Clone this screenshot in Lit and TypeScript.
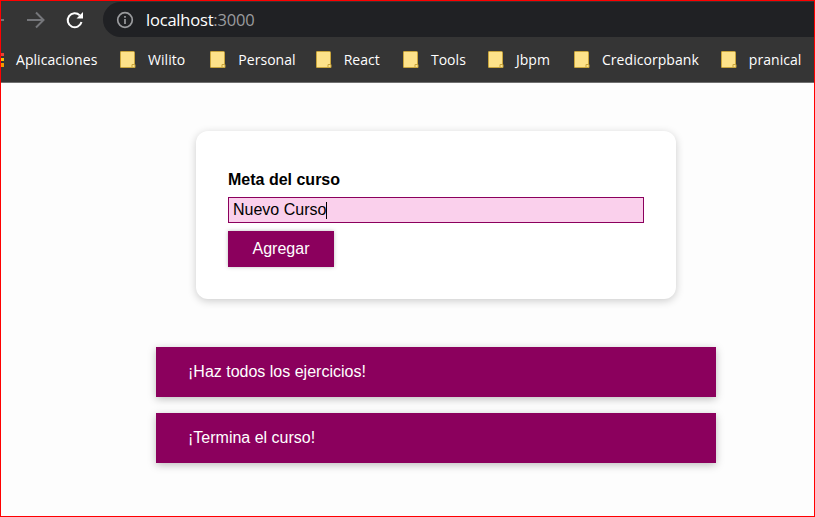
import { LitElement, html, css } from "lit";
import { customElement } from "lit/decorators.js";

const folder = html`<svg class="folder" width="16" height="18" viewBox="0 0 16 18">
  <path d="M1 .5h12.500a1 1 0 0 1 1 1V16.500H1a.5.5 0 0 1-.5-.5V1a.5.5 0 0 1 .5-.5z" fill="#fde28a" stroke="#c9a53c"/>
  <path d="M12 16.500V13.500h3v3z" fill="#fde28a" stroke="#c9a53c"/>
</svg>`;

const bookmarks: [string, number][] = [
  ["Wilito", 25],
  ["Personal", 20],
  ["React", 23],
  ["Tools", 22],
  ["Jbpm", 24],
  ["Credicorpbank", 22],
  ["pranical", 0],
];

@customElement("app-root")
export class AppRoot extends LitElement {
  static styles = css`
    :host {
      display: block;
      width: 815px;
      height: 517px;
      font-family: "Liberation Sans", Arial, sans-serif;
      background: #fff;
      overflow: hidden;
    }
    .frame {
      box-sizing: border-box;
      width: 815px;
      height: 517px;
      border: 1px solid #f00;
      display: flex;
      flex-direction: column;
      overflow: hidden;
    }
    .toolbar {
      height: 36px;
      flex: none;
      background: #353535;
      display: flex;
      align-items: flex-end;
      box-sizing: border-box;
    }
    .nav {
      width: 102px;
      height: 35px;
      flex: none;
      display: flex;
      align-items: center;
      box-sizing: border-box;
    }
    .back {
      margin-right: 23px;
    }
    .forward {
      margin-right: 19px;
    }
    .omnibox {
      flex: 1;
      height: 35px;
      background: #202124;
      border-radius: 18px 0 0 18px;
      display: flex;
      align-items: center;
      padding-left: 13px;
      gap: 12px;
      font: 16.500px "Open Sans", sans-serif;
      color: #fff;
      letter-spacing: -0.2px;
    }
    .omnibox .port {
      color: #9a9b9e;
    }
    .bookmarks {
      height: 46px;
      flex: none;
      background: #353535;
      border-bottom: 1px solid #707070;
      box-sizing: border-box;
      display: flex;
      align-items: center;
      padding-left: 15px;
      color: #fff;
      font: 14px "Open Sans", sans-serif;
      letter-spacing: 0.05px;
      position: relative;
    }
    .apps {
      position: absolute;
      left: 0;
      top: 16px;
      width: 3px;
      height: 14px;
      background: repeating-linear-gradient(to bottom, #ea4335 0 3px, #353535 3px 5px, #fbbc05 5px 8px, #353535 8px 10px, #f29900 10px 14px);
    }
    .bm {
      display: flex;
      align-items: center;
      flex: none;
    }
    .first {
      width: 104px;
      flex: none;
    }
    .folder {
      margin-right: 12px;
      flex: none;
    }
    .page {
      flex: 1;
      background: #fdfdfd;
      display: flex;
      flex-direction: column;
      align-items: center;
      padding: 48px 0 0 57px;
    }
    .card {
      width: 480px;
      height: 168px;
      box-sizing: border-box;
      background: #fff;
      border-radius: 12px;
      padding: 40px 32px 32px;
      box-shadow: 0 2px 8px rgba(0, 0, 0, 0.2);
      display: flex;
      flex-direction: column;
      align-items: flex-start;
    }
    label {
      font-weight: bold;
      font-size: 16px;
      line-height: 18px;
      color: #000;
      margin-bottom: 8px;
    }
    .input {
      box-sizing: border-box;
      width: 416px;
      height: 26px;
      border: 1px solid #8b005d;
      background: #fad0ec;
      font-size: 16px;
      line-height: 24px;
      padding: 0 4px;
      color: #000;
      display: flex;
      align-items: center;
    }
    .caret {
      width: 1px;
      height: 17px;
      background: #000;
    }
    button {
      margin-top: 8px;
      width: 106px;
      height: 36px;
      border: 1px solid #8b005d;
      background: #8b005d;
      color: #fff;
      font: 16px "Liberation Sans", Arial, sans-serif;
      box-shadow: 0 0 4px rgba(0, 0, 0, 0.26);
      padding: 0;
    }
    .goals {
      margin-top: 48px;
      display: flex;
      flex-direction: column;
      gap: 16px;
    }
    .goal {
      box-sizing: border-box;
      width: 560px;
      height: 50px;
      background: #8b005d;
      color: #fff;
      font-size: 16px;
      padding: 0 32px;
      display: flex;
      align-items: center;
      box-shadow: 0 2px 8px rgba(0, 0, 0, 0.26);
    }
  `;

  render() {
    return html`<div class="frame">
      <div class="toolbar">
        <div class="nav">
          <svg class="back" width="3" height="22" viewBox="0 0 3 22" fill="none" stroke="#75767a" stroke-width="2">
            <path d="M0 11h3" />
          </svg>
          <svg class="forward" width="19" height="22" viewBox="0 0 19 22" fill="none" stroke="#75767a" stroke-width="2">
            <path d="M0 11h16M9 3.500l7.500 7.500-7.500 7.500" />
          </svg>
          <svg width="20" height="22" viewBox="0 0 20 22" fill="none">
            <path d="M14.800 6.400A7 7 0 1 0 16.500 13" stroke="#fff" stroke-width="2" />
            <path d="M18 3v6.500H11.500z" fill="#fff" />
          </svg>
        </div>
        <div class="omnibox">
          <svg width="18" height="18" viewBox="0 0 18 18" fill="none">
            <circle cx="9" cy="9" r="7.300" stroke="#9a9b9e" stroke-width="1.700" />
            <path d="M9 8v5M9 5v1.800" stroke="#9a9b9e" stroke-width="1.700" />
          </svg>
          <span>localhost<span class="port">:3000</span></span>
        </div>
      </div>
      <div class="bookmarks">
        <div class="apps"></div>
        <div class="first">Aplicaciones</div>
        ${bookmarks.map(
          ([name, gap]) =>
            html`<div class="bm" style="margin-right:${gap}px">${folder}<span>${name}</span></div>`
        )}
      </div>
      <div class="page">
        <div class="card">
          <label>Meta del curso</label>
          <div class="input">Nuevo Curso<span class="caret"></span></div>
          <button>Agregar</button>
        </div>
        <div class="goals">
          <div class="goal">¡Haz todos los ejercicios!</div>
          <div class="goal">¡Termina el curso!</div>
        </div>
      </div>
    </div>`;
  }
}
